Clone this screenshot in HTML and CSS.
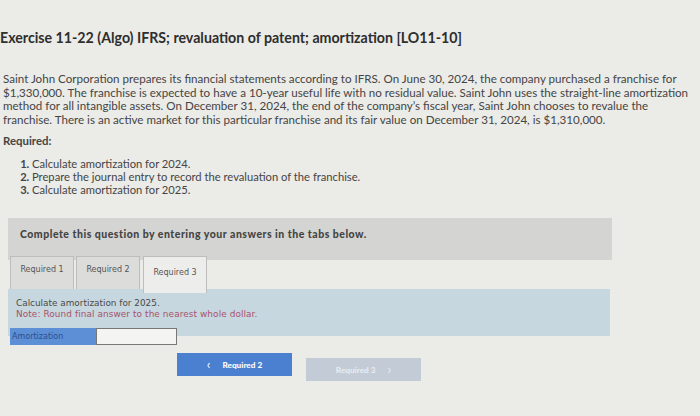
FILE: index.html
```html
<!DOCTYPE html>
<html>
<head>
<meta charset="utf-8">
<link rel="stylesheet" href="styles.css">
</head>
<body>
<div class="page">
  <h1 class="title">Exercise 11-22 (Algo) IFRS; revaluation of patent; amortization [LO11-10]</h1>
  <p class="intro">Saint John Corporation prepares its financial statements according to IFRS. On June 30, 2024, the company purchased a franchise for $1,330,000. The franchise is expected to have a 10-year useful life with no residual value. Saint John uses the straight-line amortization method for all intangible assets. On December 31, 2024, the end of the company’s fiscal year, Saint John chooses to revalue the franchise. There is an active market for this particular franchise and its fair value on December 31, 2024, is $1,310,000.</p>
  <div class="req-head">Required:</div>
  <ol class="req-list">
    <li>Calculate amortization for 2024.</li>
    <li>Prepare the journal entry to record the revaluation of the franchise.</li>
    <li>Calculate amortization for 2025.</li>
  </ol>
  <div class="complete">Complete this question by entering your answers in the tabs below.</div>
  <div class="tabs">
    <div class="tab">Required 1</div>
    <div class="tab">Required 2</div>
    <div class="tab active">Required 3</div>
  </div>
  <div class="panel">
    <div>Calculate amortization for 2025.</div>
    <div class="note">Note: Round final answer to the nearest whole dollar.</div>
  </div>
  <div class="answer-row">
    <div class="answer-label">Amortization</div>
    <div class="answer-input"></div>
  </div>
  <div class="nav">
    <div class="btn prev"><span class="chev">&lsaquo;</span>Required 2</div>
    <div class="btn next">Required 3<span class="chev">&rsaquo;</span></div>
  </div>
</div>
</body>
</html>
```
FILE: styles.css
```css
html, body {
  margin: 0;
  padding: 0;
  background: #ebebe7;
}
body {
  width: 700px;
  height: 416px;
  overflow: hidden;
  font-family: Lato, "Open Sans", sans-serif;
  color: #3a3a3a;
}
.page {
  padding: 29px 0 0 0;
}
.title {
  margin: 0;
  font-size: 14.2px;
  font-weight: 700;
  color: #2e2e2e;
  white-space: nowrap;
}
.intro {
  margin: 26px 6px 0 3px;
  font-size: 11.6px;
  line-height: 13.5px;
  color: #454545;
}
.req-head {
  margin: 8px 0 0 3px;
  font-size: 11.4px;
  font-weight: 700;
  color: #444;
}
.req-list {
  margin: 10px 0 0 0;
  padding-left: 32px;
  font-size: 11.2px;
  line-height: 13px;
  color: #454545;
}
.req-list li::marker {
  font-weight: 700;
}
.complete {
  margin: 22px 88px 0 8px;
  background: #d4d4d2;
  height: 42px;
  box-sizing: border-box;
  padding: 10px 0 0 12px;
  font-size: 10.5px;
  letter-spacing: 0.5px;
  font-weight: 900;
  color: #444;
}
.tabs {
  display: flex;
  gap: 2px;
  margin: -4px 0 0 10px;
  align-items: flex-start;
}
.tab {
  width: 64px;
  height: 33px;
  box-sizing: border-box;
  border: 1px solid #bdbdbd;
  border-bottom: none;
  background: #dcdcda;
  font-family: "DejaVu Sans", sans-serif;
  font-size: 8px;
  color: #555;
  text-align: center;
  padding-top: 8px;
}
.tab.active {
  background: #ededeb;
  height: 37px;
  padding-top: 11px;
  margin-left: 1px;
}
.panel {
  margin: -4px 90px 0 8px;
  background: #c6d7df;
  height: 47px;
  box-sizing: border-box;
  padding: 9px 0 0 8px;
  font-family: "DejaVu Sans", sans-serif;
  font-size: 8.9px;
  line-height: 11px;
  color: #4a4a4a;
}
.note {
  color: #a8526a;
  letter-spacing: 0.1px;
}
.answer-row {
  display: flex;
  margin: -8px 0 0 10px;
  height: 17px;
}
.answer-label {
  width: 86px;
  background: #5c8fd6;
  color: #2c4f8c;
  font-family: "DejaVu Sans", sans-serif;
  font-size: 8px;
  line-height: 17px;
  padding-left: 2px;
  box-sizing: border-box;
}
.answer-input {
  width: 81px;
  background: #f4f4f2;
  border: 1px solid #777;
  box-sizing: border-box;
}
.nav {
  display: flex;
  gap: 14px;
  margin: 8px 0 0 177px;
}
.btn {
  width: 115px;
  height: 23px;
  box-sizing: border-box;
  display: flex;
  align-items: center;
  justify-content: center;
  font-size: 8.2px;
  font-weight: 900;
  color: #fff;
}
.btn.prev {
  background: #4b7fcf;
}
.btn.next {
  background: #c3cbd6;
  color: #e6ebf1;
  margin-top: 5px;
}
.chev {
  font-size: 13px;
  font-weight: 400;
  margin: 0 12px;
  line-height: 1;
}
.btn.prev .chev { margin-left: 0; }
.btn.next .chev { margin-right: 0; }
```
